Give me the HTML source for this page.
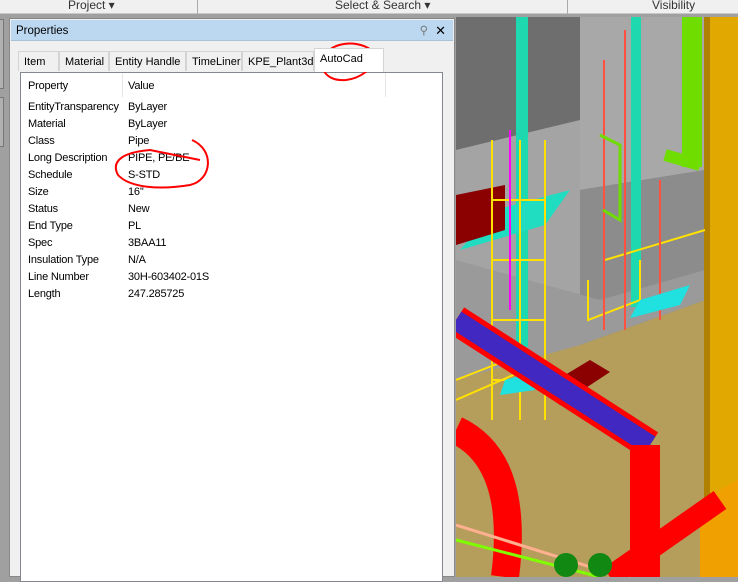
<!DOCTYPE html>
<html><head><style>
*{margin:0;padding:0;box-sizing:border-box}
body{width:738px;height:577px;overflow:hidden;position:relative;background:#a0a0a0;font-family:"Liberation Sans",Arial,sans-serif;font-size:11px;color:#000}
.top{position:absolute;left:0;top:0;width:738px;height:14px;background:#f0f0f0;border-bottom:1px solid #c8c8c8}
.top span{position:absolute;top:-2px;font-size:12px;color:#333}
.sep{position:absolute;top:0;width:1px;height:14px;background:#aaa}
.strip{position:absolute;left:0;top:17px;width:10px;height:560px;background:#a0a0a0}
.panel{position:absolute;left:9px;top:18px;width:446px;height:559px;background:#f0f0f0;border:1px solid #888}
.title{position:absolute;left:1px;top:1px;right:1px;height:21px;background:#bcd8f0;border-bottom:1px solid #a8c0d8;font-size:11.5px;padding:5px 0 0 5px}
.tab{position:absolute;top:32px;height:20px;background:#f0f0f0;border:1px solid #d4d4d4;border-bottom:none;padding:4px 0 0 5px;font-size:11px}
.content{position:absolute;left:10px;top:53px;width:423px;height:510px;background:#fff;border:1px solid #828790}
.row{position:absolute;left:7px;font-size:11px;white-space:nowrap;letter-spacing:-0.2px}
.v{position:absolute;left:100px}
</style></head><body>
<div class="top"><span style="left:68px">Project &#9662;</span><div class="sep" style="left:197px"></div><span style="left:335px">Select &amp; Search &#9662;</span><div class="sep" style="left:567px"></div><span style="left:652px">Visibility</span></div>
<div class="strip">
<div style="position:absolute;left:0;top:2px;width:4px;height:70px;border:1px solid #777;border-left:none;background:#b0b0b0"></div>
<div style="position:absolute;left:0;top:80px;width:4px;height:50px;border:1px solid #777;border-left:none;background:#b0b0b0"></div>
</div>
<svg style="position:absolute;left:456px;top:17px" width="282" height="560" viewBox="456 17 282 560">
<rect x="456" y="17" width="282" height="560" fill="#7a7a7a"/>
<polygon points="456,17 580,17 580,120 456,150" fill="#6e6e6e"/>
<polygon points="580,17 705,17 705,170 580,190" fill="#a8a8a8"/>
<polygon points="456,150 580,120 580,345 456,360" fill="#a4a4a4"/>
<polygon points="580,190 705,170 705,300 580,345" fill="#8c8c8c"/>
<polygon points="456,360 580,345 705,300 705,577 456,577" fill="#b59d5c"/>
<polygon points="456,260 600,300 705,270 705,300 580,345 456,380" fill="#9a9a9a"/>
<rect x="516" y="17" width="12" height="330" fill="#1ed8b0"/>
<rect x="631" y="17" width="10" height="290" fill="#1ed8b0"/>
<rect x="682" y="17" width="20" height="150" fill="#70dd00"/>
<path d="M665,155 L700,165" stroke="#70dd00" stroke-width="12"/>
<rect x="704" y="17" width="34" height="560" fill="#e0a800"/>
<rect x="704" y="17" width="6" height="560" fill="#b08000"/>
<path d="M700,500 L738,480 L738,577 L700,577Z" fill="#f0a000"/>
<path d="M610,577 L720,500" stroke="#ff0000" stroke-width="22"/>
<path d="M495,210 L570,190 L545,225 L460,250Z" fill="#20dcc0"/>
<path d="M456,195 L505,185 L505,230 L456,245Z" fill="#8b0000"/>
<g stroke="#ffe000" stroke-width="2" fill="none"><path d="M492,140 L492,420 M520,140 L520,420 M545,140 L545,420 M492,200 L545,200 M492,260 L545,260 M492,320 L545,320 M492,380 L545,380"/><path d="M588,280 L588,320 L640,300 L640,260 M605,260 L705,230"/><path d="M456,380 L520,355 M456,400 L520,372"/></g>
<path d="M510,130 L510,310" stroke="#ff00ff" stroke-width="2"/>
<path d="M604,60 L604,330 M625,30 L625,330 M660,180 L660,320" stroke="#ff5040" stroke-width="2"/>
<path d="M600,135 L620,145 L620,220 L603,210" stroke="#70dd00" stroke-width="3" fill="none"/>
<path d="M540,390 L590,360 L610,372 L560,405Z" fill="#8b0000"/>
<path d="M505,380 L540,370 L535,390 L500,395Z" fill="#20e0e0"/>
<path d="M640,300 L690,285 L680,305 L630,318Z" fill="#20e0e0"/>
<path d="M456,320 L650,445" stroke="#ff0000" stroke-width="30"/>
<path d="M456,320 L650,445" stroke="#4028c0" stroke-width="20"/>
<path d="M645,445 L645,577" stroke="#ff0000" stroke-width="30"/>
<path d="M456,430 Q520,460 505,577" stroke="#ff0000" stroke-width="28" fill="none"/>
<path d="M456,540 L600,577" stroke="#80ff00" stroke-width="3"/>
<path d="M456,525 L600,570" stroke="#ffb090" stroke-width="3"/>
<circle cx="566" cy="565" r="12" fill="#118811"/><circle cx="600" cy="565" r="12" fill="#118811"/>
</svg>
<div class="panel">
<div class="title">Properties<span style="position:absolute;right:7px;top:3px;font-size:13px">&#10005;</span><span style="position:absolute;right:25px;top:3px;color:#777">&#9906;</span></div>
<div class="tab" style="left:8px;width:41px">Item</div>
<div class="tab" style="left:49px;width:50px">Material</div>
<div class="tab" style="left:99px;width:77px">Entity Handle</div>
<div class="tab" style="left:176px;width:56px">TimeLiner</div>
<div class="tab" style="left:232px;width:72px">KPE_Plant3d</div>
<div class="tab" style="left:304px;top:29px;height:24px;width:70px;background:#fff;z-index:2">AutoCad</div>
<div class="content">
<div style="position:absolute;left:101px;top:0;width:1px;height:24px;background:#e5e5e5"></div>
<div style="position:absolute;left:364px;top:0;width:1px;height:24px;background:#e5e5e5"></div>
<div class="row" style="top:7px">Property<span class="v">Value</span></div>
<div class="row" style="top:28px">EntityTransparency<span class="v">ByLayer</span></div>
<div class="row" style="top:45px">Material<span class="v">ByLayer</span></div>
<div class="row" style="top:62px">Class<span class="v">Pipe</span></div>
<div class="row" style="top:79px">Long Description<span class="v">PIPE, PE/BE</span></div>
<div class="row" style="top:96px">Schedule<span class="v">S-STD</span></div>
<div class="row" style="top:113px">Size<span class="v">16''</span></div>
<div class="row" style="top:130px">Status<span class="v">New</span></div>
<div class="row" style="top:147px">End Type<span class="v">PL</span></div>
<div class="row" style="top:164px">Spec<span class="v">3BAA11</span></div>
<div class="row" style="top:181px">Insulation Type<span class="v">N/A</span></div>
<div class="row" style="top:198px">Line Number<span class="v">30H-603402-01S</span></div>
<div class="row" style="top:215px">Length<span class="v">247.285725</span></div>
</div>
</div>
<svg style="position:absolute;left:0;top:0" width="738" height="577">
<path d="M370,52 C385,40 378,76 346,80 C322,82 315,62 332,48 C346,40 370,42 380,60" stroke="#f00" stroke-width="2" fill="none"/>
<path d="M192,140 C215,150 212,180 190,185 C160,190 130,188 118,175 C110,160 125,152 150,150 L200,160" stroke="#f00" stroke-width="2" fill="none"/>
</svg>
</body></html>
